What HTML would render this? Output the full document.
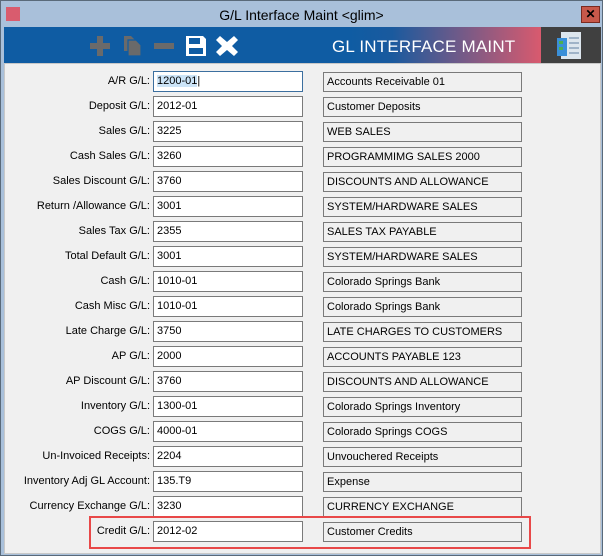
<!DOCTYPE html>
<html><head><style>
body{margin:0;width:603px;height:556px;overflow:hidden;font-family:"Liberation Sans",sans-serif;font-size:11px;background:#a9c0da;position:relative}
.win{position:absolute;left:0;top:0;width:601px;height:554px;border:1px solid #5a6a7a;background:#a9c0da}
.title{position:absolute;top:0;left:0;width:601px;height:26px;text-align:center;line-height:29px;font-size:14px;color:#000}
.ico{position:absolute;left:5px;top:6px;width:14px;height:14px;background:#d95c6e}
.close{position:absolute;left:580px;top:5px;width:17px;height:15px;background:#c7584a;border:1px solid #7a2a20;color:#000;font-weight:bold;font-size:12px;line-height:15px;text-align:center}
.banner{position:absolute;left:3px;top:26px;width:597px;height:36px;background:linear-gradient(90deg,#0f5ca3 0%,#0f5ca3 58%,#1a5a9e 65%,#d95a6e 90%,#d95a6e 100%)}
.dark{position:absolute;left:537px;top:0;width:60px;height:36px;background:#404040}
.btitle{position:absolute;left:328px;top:10px;color:#fff;font-size:17px;letter-spacing:0.2px}
.body{position:absolute;left:3px;top:62px;width:595px;height:489px;background:#f0f0f0;border:1px solid #c8c8c8}
.lab{position:absolute;right:453px;width:180px;text-align:right;height:20px;line-height:20px;color:#000}
.in{position:absolute;left:153px;width:145px;height:19px;border:1px solid #7a7a7a;background:#fff;line-height:19px;padding-left:3px;box-sizing:content-box}
.ds{position:absolute;left:323px;width:194px;height:18px;border:1px solid #7a7a7a;background:#f0f0f0;line-height:18px;padding-left:3px}
.red{position:absolute;left:89px;top:516px;width:438px;height:29px;border:2px solid #e84848}
</style></head><body>
<div class="win">
<div class="title">G/L Interface Maint &lt;glim&gt;</div>
<div class="ico"></div><div class="close">✕</div>
<div class="banner">
<svg style="position:absolute;left:84px;top:9px" width="160" height="20">
<path d="M9 0h6v7h7v6h-7v7H9v-7H2V7h7z" fill="#6a6a6a"/>
<path d="M36 0h7l4 4v11H36z" fill="#6a6a6a"/><path d="M40 4h8l5 5v11H40z" fill="#6a6a6a" stroke="#0f5ca3" stroke-width="1.2"/>
<rect x="66" y="7" width="20" height="6" fill="#6a6a6a"/>
<path d="M98 0h17l3 3v17H98z" fill="#fff"/><rect x="101" y="2" width="11" height="6" fill="#0f5ca3"/><rect x="101" y="12" width="14" height="6" fill="#0f5ca3"/>
<path d="M128 4l4-4 7 6 7-6 4 4-6 6 6 6-4 4-7-6-7 6-4-4 6-6z" fill="#fff"/>
</svg>
<div class="btitle">GL INTERFACE MAINT</div>
<div class="dark"><svg style="position:absolute;left:16px;top:5px" width="26" height="28"><rect x="4" y="0" width="20" height="27" fill="#dde6ee"/><rect x="0" y="6" width="10" height="18" fill="#3a8fd8"/><rect x="2" y="9" width="4" height="3" fill="#4caf50"/><rect x="2" y="15" width="4" height="3" fill="#4caf50"/><g fill="#9fb3c8"><rect x="12" y="5" width="10" height="2"/><rect x="12" y="10" width="10" height="2"/><rect x="12" y="15" width="10" height="2"/><rect x="12" y="20" width="10" height="2"/></g></svg></div>
</div>
<div class="body"></div>
</div>
<div id="rows"></div>
<div class="red"></div>
<script>
var d=[["A/R G/L:","1200-01","Accounts Receivable 01"],["Deposit G/L:","2012-01","Customer Deposits"],["Sales G/L:","3225","WEB SALES"],["Cash Sales G/L:","3260","PROGRAMMIMG SALES 2000"],["Sales Discount G/L:","3760","DISCOUNTS AND ALLOWANCE"],["Return /Allowance G/L:","3001","SYSTEM/HARDWARE SALES"],["Sales Tax G/L:","2355","SALES TAX PAYABLE"],["Total Default G/L:","3001","SYSTEM/HARDWARE SALES"],["Cash G/L:","1010-01","Colorado Springs Bank"],["Cash Misc G/L:","1010-01","Colorado Springs Bank"],["Late Charge G/L:","3750","LATE CHARGES TO CUSTOMERS"],["AP G/L:","2000","ACCOUNTS PAYABLE 123"],["AP Discount G/L:","3760","DISCOUNTS AND ALLOWANCE"],["Inventory G/L:","1300-01","Colorado Springs Inventory"],["COGS G/L:","4000-01","Colorado Springs COGS"],["Un-Invoiced Receipts:","2204","Unvouchered Receipts"],["Inventory Adj GL Account:","135.T9","Expense"],["Currency Exchange G/L:","3230","CURRENCY EXCHANGE"],["Credit G/L:","2012-02","Customer Credits"]];
var h="";d.forEach(function(r,i){var y=71+i*25;
h+='<div class="lab" style="top:'+y+'px">'+r[0]+'</div><div class="in" style="top:'+y+'px'+(i==0?';border-color:#3c6f9f':'')+'">'+(i==0?'<span style="background:#cce4f7">1200-01</span>|':r[1])+'</div><div class="ds" style="top:'+(y+1)+'px">'+r[2]+'</div>';});
document.getElementById("rows").innerHTML=h;
</script>
</body></html>
